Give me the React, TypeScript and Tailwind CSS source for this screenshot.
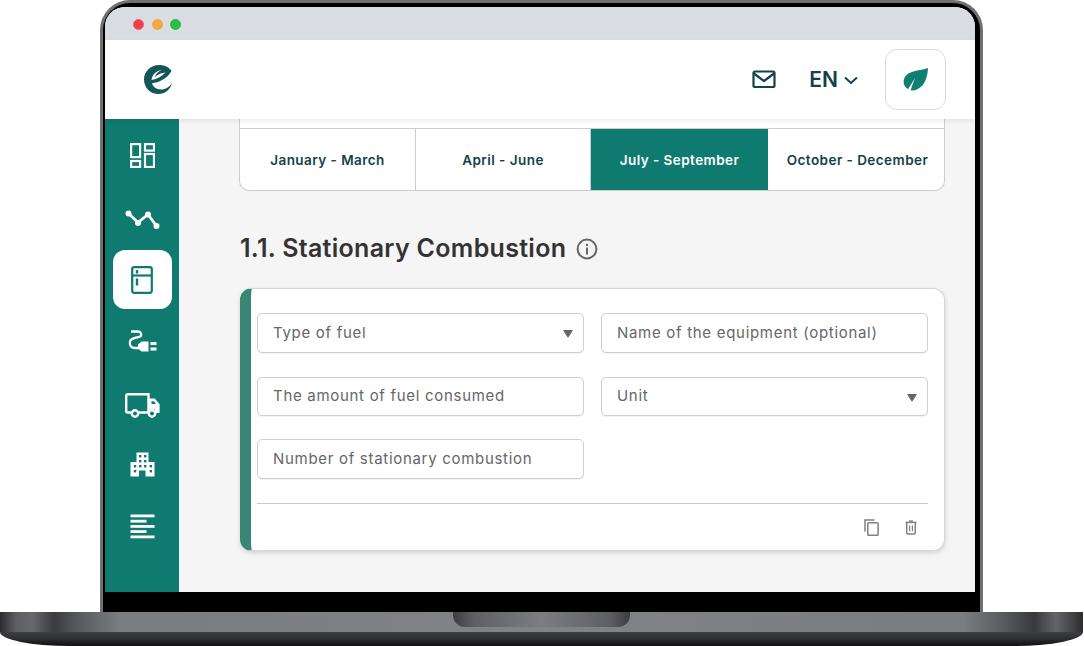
import React from "react";

function Logo() {
  return (
    <svg width="28" height="29" viewBox="0 0 28 29" fill="none">
      <path fill="#14565a" d="M27.5 6C25 2 20.5 0 15 0 6.5 0 0 6.5 0 14.5 0 23 6.5 29 14.5 29 21 29 26.5 24.5 28 18 25.5 22 21.5 24.5 17 24.5 12.5 24.5 9 22 8 18.3 14.5 17.5 23 14 27.5 6Z" />
      <path fill="white" d="M7.5 15C8 10 12 5.8 17.5 5 13.8 7 11.5 9.5 10.5 12.2 13.5 9.4 17 7.6 21.5 7.4 18 11 13.5 14 7.5 15Z" />
    </svg>
  );
}

function Mail() {
  return (
    <svg width="24" height="19" viewBox="0 0 24 19" fill="none" stroke="#14414a" strokeWidth="2.2" strokeLinejoin="round">
      <rect x="1.5" y="1.5" width="21" height="15.5" rx="1.5" />
      <path d="M2 3.5l10 7.5 10-7.5" />
    </svg>
  );
}

function Leaf() {
  return (
    <svg width="25" height="25" viewBox="0 0 25 25">
      <path fill="#0f7f72" d="M25 1C19 3.5 9 3 3.5 8 0 11.5-.5 17 3 20.5 5 22.5 7 23.5 9 23.5 17 23.5 24.5 16 25 1Z" />
      <path fill="white" d="M3.5 24.5L12.5 10.5C10.5 15 8.5 19 7.5 24.5Z" />
    </svg>
  );
}

function Dash() {
  return (
    <svg width="25" height="25" viewBox="0 0 25 25" fill="none" stroke="white" strokeWidth="2.2">
      <rect x="1.1" y="1.1" width="9" height="13" />
      <rect x="15" y="1.1" width="9" height="6.5" />
      <rect x="15" y="11" width="9" height="13" />
      <rect x="1.1" y="18" width="9" height="6" />
    </svg>
  );
}
function Trend() {
  return (
    <svg className="mt-[4px]" width="35" height="20" viewBox="0 0 35 20">
      <path d="M3.5 3.5L13 12.5 23 4.5 31.5 16" fill="none" stroke="white" strokeWidth="2.8" />
      <circle cx="3.5" cy="3.5" r="3" fill="white" />
      <circle cx="13" cy="13" r="3" fill="white" />
      <circle cx="23" cy="4.5" r="3" fill="white" />
      <circle cx="31.5" cy="16" r="3" fill="white" />
    </svg>
  );
}
function Fridge() {
  return (
    <svg className="mt-[2px]" width="22" height="28" viewBox="0 0 22 28" fill="none">
      <rect x="1.2" y="1.2" width="19.6" height="25.6" rx="2" stroke="#0f7a6f" strokeWidth="2.2" />
      <path d="M1.5 9.5H20.5" stroke="#0f7a6f" strokeWidth="2.2" />
      <path d="M6 4V7.5M6 12.5V19.5" stroke="#0f7a6f" strokeWidth="2.4" />
    </svg>
  );
}
function Plug() {
  return (
    <svg width="29" height="23" viewBox="0 0 29 23" fill="none">
      <path d="M3 2.5H10C12.8 2.5 13.5 5 13 6.8 12.4 9 3 8 2 12.5 1.2 16 3 19 6.5 19H11" stroke="white" strokeWidth="2.3" />
      <path d="M10 15.5L13.5 12.5H20.5V22.5H13.5L10 19.5Z" fill="white" />
      <path d="M22.5 14.5H28.5M22.5 20H28.5" stroke="white" strokeWidth="3" />
    </svg>
  );
}
function Truck() {
  return (
    <svg className="mt-[6px]" width="35" height="25" viewBox="0 0 35 25" fill="none">
      <path d="M7 19.5H2.8C1.8 19.5 1.2 18.8 1.2 18V3C1.2 2 2 1.2 3 1.2H23.5V19.5H13" stroke="white" strokeWidth="2.4" />
      <path d="M24 6H29.5L34 11.5V19.5H30V16.5H24Z" fill="white" />
      <path d="M24 6H29.5L34 11.5V19.5H24Z" stroke="white" strokeWidth="1.2" />
      <path d="M26.5 8.2H29L31 11H26.5Z" fill="#0f7a6f" />
      <circle cx="10" cy="20.5" r="3.2" stroke="white" strokeWidth="2.4" />
      <circle cx="27" cy="20.5" r="3.2" stroke="white" strokeWidth="2.4" fill="#0f7a6f" />
    </svg>
  );
}
function Building() {
  const holes: [number, number][] = [
    [9, 3], [14, 3], [9, 8], [14, 8],
    [3.8, 13], [9, 13], [14, 13], [19.6, 13],
    [3.8, 18], [19.6, 18],
  ];
  return (
    <svg width="25" height="25" viewBox="0 0 25 25">
      <path fill="white" d="M0.5 24.5V10H6.5V0.5H18.5V10H24.5V24.5H15.5V18.5H9V24.5Z" />
      {holes.map(([x, y], i) => (
        <rect key={i} x={x} y={y} width="2.4" height="2.4" fill="#0f7a6f" />
      ))}
    </svg>
  );
}
function Lines() {
  return (
    <svg className="mt-[2px]" width="25" height="25" viewBox="0 0 25 25" fill="white">
      <rect x="0.5" y="0.5" width="24" height="2.8" />
      <rect x="0.5" y="5.8" width="16" height="2.8" />
      <rect x="0.5" y="11" width="24" height="2.8" />
      <rect x="0.5" y="16.2" width="16" height="2.8" />
      <rect x="0.5" y="21.5" width="24" height="2.8" />
    </svg>
  );
}
function Info() {
  return (
    <svg className="mt-[2px]" width="22" height="22" viewBox="0 0 22 22" fill="none">
      <circle cx="11" cy="11" r="9.4" stroke="#666" strokeWidth="2" />
      <rect x="10" y="9.5" width="2" height="7" fill="#666" />
      <rect x="10" y="5.8" width="2" height="2.2" fill="#666" />
    </svg>
  );
}
function Copy() {
  return (
    <svg width="15" height="17" viewBox="0 0 15 17" fill="none" stroke="#808080" strokeWidth="1.5">
      <path d="M1 12.5V1H10.5" />
      <rect x="3.8" y="3.8" width="10.3" height="12.5" rx="1" />
    </svg>
  );
}
function Trash() {
  return (
    <svg width="12" height="15" viewBox="0 0 12 15" fill="none">
      <path d="M0.5 2.4H11.5" stroke="#808080" strokeWidth="1.5" />
      <path d="M4 1.1H8" stroke="#808080" strokeWidth="1.5" />
      <path d="M1.7 3V12.5C1.7 13.4 2.2 14 3 14H9C9.8 14 10.3 13.4 10.3 12.5V3" stroke="#808080" strokeWidth="1.5" />
      <path d="M4.6 5.6V11.3M7.4 5.6V11.3" stroke="#808080" strokeWidth="1.2" />
    </svg>
  );
}

function Field({ label, select, lower }: { label: string; select?: boolean; lower?: boolean }) {
  return (
    <div
      className={
        lower
          ? "mt-[1px] h-[39px] flex items-center justify-between bg-white border border-[#cfcfcf] rounded-[5px] pl-[15px] pr-[10px] shadow-[0_1px_1px_rgba(0,0,0,0.05)]"
          : "h-[40px] flex items-center justify-between bg-white border border-[#cfcfcf] rounded-[5px] pl-[15px] pr-[10px] shadow-[0_1px_1px_rgba(0,0,0,0.05)]"
      }
    >
      <span className="text-[15px] text-[#666] tracking-[0.7px] whitespace-nowrap">{label}</span>
      {select && <span className="mt-[2px] w-0 h-0 border-x-[5.5px] border-x-transparent border-t-[8px] border-t-[#666]" />}
    </div>
  );
}

const quarters = ["January - March", "April - June", "July - September", "October - December"];

export default function App() {
  const icons = [<Dash />, <Trend />, <Fridge />, <Plug />, <Truck />, <Building />, <Lines />];
  return (
    <div className="relative w-[1084px] h-[646px] bg-white overflow-hidden font-['Inter','Liberation_Sans',sans-serif]">
      <div className="ml-[100px] w-[883px] h-[612px] border-[3px] border-b-0 border-[#6f7074] rounded-t-[30px] bg-black pt-[4px] pl-[2px] pr-[5px] pb-[20px]">
        <div className="h-full rounded-t-[20px] overflow-hidden flex flex-col bg-[#f5f5f5]">
          <div className="h-[33px] shrink-0 bg-[#d9dce0] flex items-center gap-[7.5px] pl-[28px] pt-[1px]">
            <span className="w-[11px] h-[11px] rounded-full bg-[#f23d4a] border border-[#e8606a]" />
            <span className="w-[11px] h-[11px] rounded-full bg-[#f5a83c] border border-[#e8a850]" />
            <span className="w-[11px] h-[11px] rounded-full bg-[#27c13f] border border-[#38b14c]" />
          </div>
          <div className="relative z-10 h-[79px] shrink-0 bg-white flex items-center pl-[39px] pr-[29px] shadow-[0_2px_5px_rgba(0,0,0,0.08)]">
            <Logo />
            <div className="ml-auto flex items-center">
              <Mail />
              <span className="ml-[33px] text-[21px] leading-none font-semibold text-[#14414a]">EN</span>
              <svg className="ml-[6px] mt-[1px]" width="14" height="9" viewBox="0 0 14 9" fill="none" stroke="#14414a" strokeWidth="2">
                <path d="M1 1.5l6 5.5 6-5.5" />
              </svg>
              <div className="ml-[27px] w-[61px] h-[61px] rounded-[12px] border-[1.5px] border-[#d6dcda] flex items-center justify-center">
                <Leaf />
              </div>
            </div>
          </div>
          <div className="flex-1 flex min-h-0">
            <nav className="w-[74px] shrink-0 bg-[#0f7a6f] flex flex-col items-center pt-[6px]">
              {icons.map((ic, i) => (
                <div key={i} className="h-[61.7px] w-full flex items-center justify-center shrink-0">
                  {i === 2 ? (
                    <div className="w-[59px] h-[59px] rounded-[12px] bg-white flex items-center justify-center">{ic}</div>
                  ) : ic}
                </div>
              ))}
            </nav>
            <main className="flex-1 pl-[60px] pr-[30px] min-w-0">
              <div className="h-[72px] bg-white border border-t-0 border-[#cdcdcd] rounded-b-[10px] pt-[9px]">
                <div className="h-[62px] grid grid-cols-[176px_175px_177px_1fr] border-t border-[#cdcdcd]">
                  {quarters.map((q, i) => (
                    <div
                      key={q}
                      className={
                        i === 2
                          ? "flex items-center justify-center bg-[#0f7a6f] text-white text-[13.5px] tracking-[0.45px] font-semibold whitespace-nowrap pt-[1px]"
                          : i === 3
                          ? "flex items-center justify-center text-[#14414a] text-[13.5px] tracking-[0.45px] font-semibold whitespace-nowrap pt-[1px] pl-[3px]"
                          : "flex items-center justify-center text-[#14414a] text-[13.5px] tracking-[0.45px] font-semibold border-r border-[#cdcdcd] whitespace-nowrap pt-[1px]"
                      }
                    >
                      {q}
                    </div>
                  ))}
                </div>
              </div>
              <div className="mt-[41px] h-[32px] flex items-center gap-[10px]">
                <h1 className="text-[25px] tracking-[0.3px] font-semibold text-[#333] leading-none whitespace-nowrap ml-[1px]">1.1. Stationary Combustion</h1>
                <Info />
              </div>
              <div className="ml-[1px] mt-[24px] h-[263px] bg-white rounded-[12px] border border-[#d6d6d6] border-l-[11px] border-l-[#3a8675] shadow-[0_2px_5px_rgba(0,0,0,0.15)] pl-[6px] pr-[16px] pt-[24px]">
                <div className="grid grid-cols-[327px_327px] gap-x-[17px] gap-y-[23px]">
                  <Field label="Type of fuel" select />
                  <Field label="Name of the equipment (optional)" />
                  <Field label="The amount of fuel consumed" lower />
                  <Field label="Unit" select lower />
                  <Field label="Number of stationary combustion" />
                </div>
                <div className="mt-[24px] border-t border-[#c9c9c9] h-[47px] flex items-center justify-end gap-[26px] pr-[11px]">
                  <Copy />
                  <Trash />
                </div>
              </div>
            </main>
          </div>
        </div>
      </div>
      <div className="relative h-[34px] w-[1083px]">
        <div className="h-[20px] bg-[linear-gradient(90deg,#2c2c30_0%,#5f5e64_1.5%,#68676c_3%,#3a3a3f_5%,#55575b_7%,#7a7d80_11%,#818386_50%,#7a7d80_89%,#55575b_93%,#38383d_95.5%,#65646a_97.5%,#2c2c30_100%)]" />
        <div className="h-[14px] rounded-b-[70px_14px] bg-[linear-gradient(180deg,#3d3e42_0%,#2f3034_45%,#101014_100%)]" />
        <div className="absolute top-0 left-[453px] w-[177px] h-[15px] rounded-b-[12px] bg-[linear-gradient(90deg,#3c3c40,#5f6064_12%,#7b7d80_50%,#5f6064_88%,#3c3c40)]" />
      </div>
    </div>
  );
}
